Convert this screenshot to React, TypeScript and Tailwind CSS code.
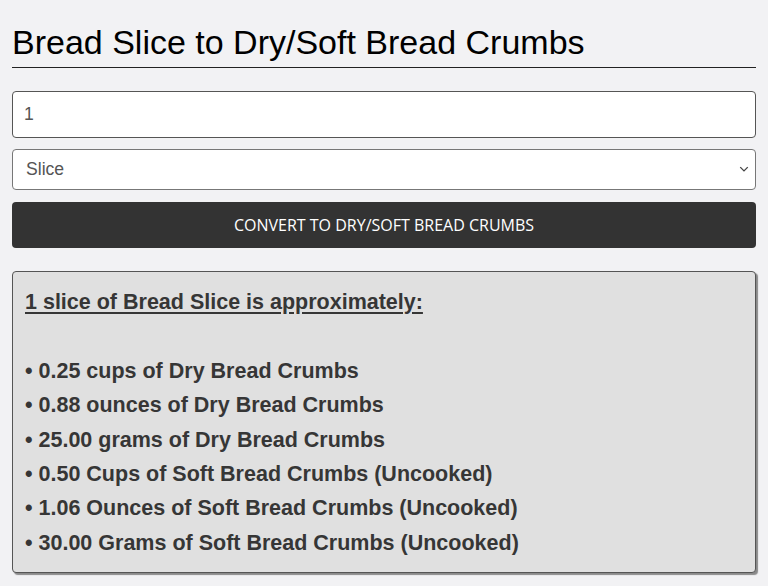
import React, { useState } from 'react';

const results = [
  '0.25 cups of Dry Bread Crumbs',
  '0.88 ounces of Dry Bread Crumbs',
  '25.00 grams of Dry Bread Crumbs',
  '0.50 Cups of Soft Bread Crumbs (Uncooked)',
  '1.06 Ounces of Soft Bread Crumbs (Uncooked)',
  '30.00 Grams of Soft Bread Crumbs (Uncooked)',
];

export default function App() {
  const [amount, setAmount] = useState('1');
  const [unit, setUnit] = useState('Slice');

  return (
    <div className="min-h-[586px] bg-[#f2f2f4] px-3 pt-[23px] font-['Liberation_Sans',Arial,sans-serif]">
      <h1 className="text-[34px] leading-[38px] text-black">Bread Slice to Dry/Soft Bread Crumbs</h1>
      <hr className="mt-[6px] border-t border-[#222]" />

      <input
        value={amount}
        onChange={(e) => setAmount(e.target.value)}
        className="mt-[23px] block h-[47px] w-full rounded-[4px] border border-[#555] bg-white px-[11px] text-[17.6px] text-[#555] outline-none"
      />

      <div className="relative mt-[11px]">
        <select
          value={unit}
          onChange={(e) => setUnit(e.target.value)}
          className="block h-[41px] w-full appearance-none rounded-[4px] border border-[#777] bg-white px-[13px] text-[17.6px] text-[#555] outline-none"
        >
          <option>Slice</option>
          <option>Cup</option>
        </select>
        <svg
          viewBox="0 0 12 8"
          className="pointer-events-none absolute right-[7px] top-[17px] h-[6px] w-[10px] text-[#444]"
          fill="none"
        >
          <path d="M1 1.5 L6 6.5 L11 1.5" stroke="currentColor" strokeWidth="1.8" />
        </svg>
      </div>

      <button className="mt-[12px] block h-[46px] w-full rounded-[4px] bg-[#333333] font-['Open_Sans',sans-serif] text-[16px] text-white">
        CONVERT TO DRY/SOFT BREAD CRUMBS
      </button>

      <div className="mt-[23px] rounded-[4px] border border-[#555] bg-[#e0e0e0] px-[12px] pt-[13px] pb-[12px] font-bold text-[21.5px] leading-[34.4px] text-[#363636] shadow-[2px_2px_1px_#8a8a8a]">
        <div className="underline underline-offset-[3px]">1 slice of Bread Slice is approximately:</div>
        <div>&nbsp;</div>
        {results.map((r) => (
          <div key={r}>• {r}</div>
        ))}
      </div>
    </div>
  );
}
